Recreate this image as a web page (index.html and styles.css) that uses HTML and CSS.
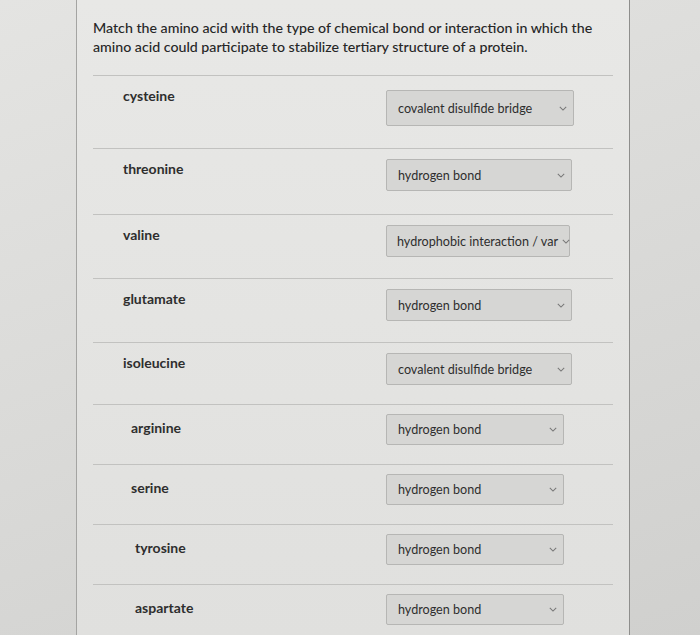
FILE: index.html
```html
<!DOCTYPE html>
<html>
<head>
<meta charset="utf-8">
<link rel="stylesheet" href="styles.css">
</head>
<body>
<div class="card">
  <p class="question">Match the amino acid with the type of chemical bond or interaction in which the amino acid could participate to stabilize tertiary structure of a protein.</p>
  <div class="rows">
    <div class="row"><span class="label">cysteine</span><div class="select"><span class="value">covalent disulfide bridge</span><svg class="chev" viewBox="0 0 10 6"><path d="M1 1 L5 5 L9 1"/></svg></div></div>
    <div class="row"><span class="label">threonine</span><div class="select"><span class="value">hydrogen bond</span><svg class="chev" viewBox="0 0 10 6"><path d="M1 1 L5 5 L9 1"/></svg></div></div>
    <div class="row"><span class="label">valine</span><div class="select"><span class="value">hydrophobic interaction / var</span><svg class="chev" viewBox="0 0 10 6"><path d="M1 1 L5 5 L9 1"/></svg></div></div>
    <div class="row"><span class="label">glutamate</span><div class="select"><span class="value">hydrogen bond</span><svg class="chev" viewBox="0 0 10 6"><path d="M1 1 L5 5 L9 1"/></svg></div></div>
    <div class="row"><span class="label">isoleucine</span><div class="select"><span class="value">covalent disulfide bridge</span><svg class="chev" viewBox="0 0 10 6"><path d="M1 1 L5 5 L9 1"/></svg></div></div>
    <div class="row"><span class="label">arginine</span><div class="select"><span class="value">hydrogen bond</span><svg class="chev" viewBox="0 0 10 6"><path d="M1 1 L5 5 L9 1"/></svg></div></div>
    <div class="row"><span class="label">serine</span><div class="select"><span class="value">hydrogen bond</span><svg class="chev" viewBox="0 0 10 6"><path d="M1 1 L5 5 L9 1"/></svg></div></div>
    <div class="row"><span class="label">tyrosine</span><div class="select"><span class="value">hydrogen bond</span><svg class="chev" viewBox="0 0 10 6"><path d="M1 1 L5 5 L9 1"/></svg></div></div>
    <div class="row"><span class="label">aspartate</span><div class="select"><span class="value">hydrogen bond</span><svg class="chev" viewBox="0 0 10 6"><path d="M1 1 L5 5 L9 1"/></svg></div></div>
  </div>
</div>
</body>
</html>
```
FILE: styles.css
```css
html, body {
  margin: 0;
  padding: 0;
  height: 100%;
}
body {
  background: linear-gradient(160deg, #e4e4e2 0%, #d8d8d6 60%, #d0d0ce 100%);
  font-family: Lato, "Open Sans", sans-serif;
  color: #2a2a2a;
  overflow: hidden;
}
.card {
  margin-left: 76px;
  width: 520px;
  height: 635px;
  padding: 0 16px;
  background: linear-gradient(180deg, #e8e8e6 0%, #e0e0de 100%);
  border-left: 1px solid #a4a4a2;
  border-right: 1px solid #8e8e8c;
}
.question {
  margin: 0;
  padding-top: 18px;
  padding-right: 20px;
  font-size: 14.2px;
  line-height: 19px;
  font-weight: 500;
  color: #262626;
}
.rows {
  margin-top: 19px;
}
.row {
  display: flex;
  align-items: flex-start;
  border-top: 1px solid #c2c2c0;
  height: 59px;
}
.row:nth-child(1) { height: 72px; }
.row:nth-child(2) { height: 65px; }
.row:nth-child(3) { height: 63px; }
.row:nth-child(4) { height: 63px; }
.row:nth-child(5) { height: 61px; }
.label {
  box-sizing: border-box;
  flex: none;
  width: 293px;
  padding-left: 30px;
  padding-top: 11px;
  font-size: 14px;
  font-weight: 700;
  color: #2e2e2e;
}
.row:nth-child(n+6) .label { padding-left: 38px; padding-top: 14px; }
.row:nth-child(n+8) .label { padding-left: 42px; }
.select {
  margin-top: 10px;
  width: 186px;
  height: 32px;
  box-sizing: border-box;
  display: flex;
  align-items: center;
  justify-content: space-between;
  gap: 4px;
  padding: 0 6px 0 11px;
  background: #d6d6d4;
  border: 1px solid #b6b6b4;
  border-radius: 2px;
  font-size: 12.6px;
  color: #2e2e2e;
}
.value {
  white-space: nowrap;
  flex: 1;
}
.row:nth-child(1) .select { margin-top: 14px; height: 36px; width: 188px; }
.row:nth-child(3) .select { width: 184px; padding-left: 10px; padding-right: 5px; }
.row:nth-child(n+6) .select { margin-top: 9px; width: 178px; height: 31px; }
.chev {
  flex: none;
  width: 8px;
  height: 5px;
  fill: none;
  stroke: #777;
  stroke-width: 1.3;
}
```
